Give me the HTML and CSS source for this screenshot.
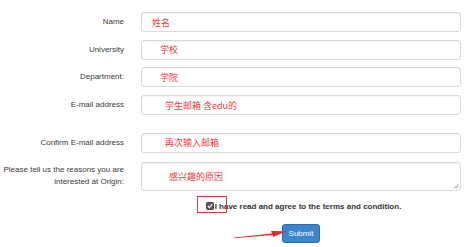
FILE: index.html
```html
<!DOCTYPE html>
<html lang="en">

<head>
    <meta charset="UTF-8">
    <meta name="viewport" content="width=device-width, initial-scale=1.0">
    <title>Register</title>
    <link rel="stylesheet" href="styles.css">
</head>

<body>
    <form class="form">
        <div class="row">
            <label class="row-label">Name</label>
            <div class="field"><span class="note note-1">姓名</span></div>
        </div>
        <div class="row">
            <label class="row-label">University</label>
            <div class="field"><span class="note note-2">学校</span></div>
        </div>
        <div class="row">
            <label class="row-label">Department:</label>
            <div class="field"><span class="note note-2">学院</span></div>
        </div>
        <div class="row">
            <label class="row-label">E-mail address</label>
            <div class="field"><span class="note note-3">学生邮箱 含edu的</span></div>
        </div>
        <div class="row row-spaced">
            <label class="row-label">Confirm E-mail address</label>
            <div class="field"><span class="note note-3">再次输入邮箱</span></div>
        </div>
        <div class="row row-tall">
            <label class="row-label">Please tell us the reasons you are<br>interested at Origin:</label>
            <div class="field field-area">
                <span class="note note-4">感兴趣的原因</span>
                <svg class="grip" width="6" height="6" viewBox="0 0 6 6">
                    <path d="M1 5.5 L5.5 1 M3 5.5 L5.5 3" stroke="#888" stroke-width="0.8" fill="none" />
                </svg>
            </div>
        </div>
        <div class="actions">
            <div class="agree">
                <svg class="check" width="8" height="8" viewBox="0 0 8 8">
                    <rect x="0.5" y="0.5" width="7" height="7" rx="1" fill="#5a5a5a" stroke="#444" />
                    <path d="M1.8 4 L3.4 5.6 L6.3 2.2" stroke="#fff" stroke-width="1.2" fill="none" />
                </svg>
                <span>I have read and agree to the terms and condition.</span>
                <span class="mark-box"></span>
            </div>
            <div class="submit-wrap">
                <svg class="arrow" width="54" height="12" viewBox="0 0 54 12">
                    <polygon points="0,9.5 38,5.6 37,3 53,3.2 39,9 38.6,7 0,10.3" fill="#e8282b" />
                </svg>
                <button type="button" class="btn">Submit</button>
            </div>
        </div>
    </form>
</body>

</html>
```

FILE: styles.css
```css
body {
    margin: 0;
    background: #fff;
    font-family: "Liberation Sans", Arial, sans-serif;
    color: #333;
}

.form {
    width: 474px;
    padding-top: 12px;
    display: flex;
    flex-direction: column;
    gap: 7.7px;
}

.row {
    display: flex;
    align-items: center;
}

.row-spaced {
    margin-top: 10px;
}

.row-label {
    width: 124px;
    margin-right: 17px;
    text-align: right;
    font-size: 8px;
    line-height: 12px;
    color: #3a3a3a;
}

.field {
    position: relative;
    box-sizing: border-box;
    width: 320px;
    height: 20px;
    border: 1px solid #d9d9d9;
    border-radius: 3px;
    box-shadow: inset 0 1px 1px rgba(0, 0, 0, 0.05);
    display: flex;
    align-items: center;
}

.field-area {
    height: 29px;
    margin-top: 1.3px;
}

.note {
    font-family: "Noto Sans CJK SC", sans-serif;
    font-size: 9px;
    color: #ee3a3c;
}

.note-1 { padding-left: 10px; }
.note-2 { padding-left: 18px; }
.note-3 { padding-left: 23px; }
.note-4 { padding-left: 27px; }

.grip {
    position: absolute;
    right: 1px;
    bottom: 1px;
}

.actions {
    margin-left: 141px;
    width: 320px;
    display: flex;
    flex-direction: column;
    align-items: center;
}

.agree {
    position: relative;
    display: flex;
    align-items: center;
    gap: 1px;
    margin-top: 4px;
    margin-left: 5px;
    font-size: 8px;
    font-weight: bold;
    color: #333;
}

.check {
    margin-top: -1px;
}

.mark-box {
    position: absolute;
    left: -9px;
    top: -6px;
    width: 28px;
    height: 15px;
    border: 1.5px solid #e53535;
}

.submit-wrap {
    position: relative;
    margin-top: 11px;
}

.arrow {
    position: absolute;
    left: -48px;
    top: 6px;
}

.btn {
    width: 38px;
    height: 19px;
    padding: 0;
    border: 1px solid #2e6da4;
    border-radius: 3px;
    background: #3b86cc;
    color: #fff;
    font-family: "Liberation Sans", Arial, sans-serif;
    font-size: 8px;
}
```
